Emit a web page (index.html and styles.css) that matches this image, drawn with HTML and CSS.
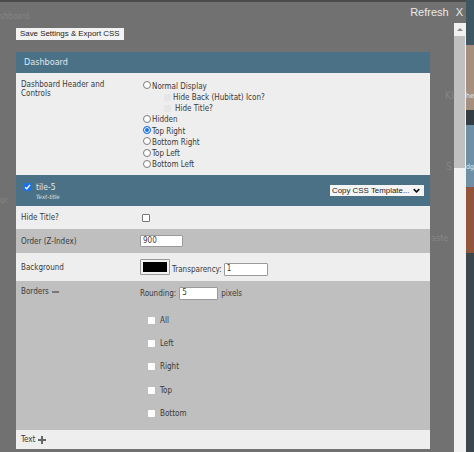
FILE: index.html
```html
<!DOCTYPE html>
<html lang="en">
<head>
<meta charset="utf-8">
<title>Dashboard</title>
<link rel="stylesheet" href="styles.css">
</head>
<body>
<div class="page">
  <div class="overlay">
    <span class="ghost g-or">or</span>
    <span class="ghost g-ki">Ki</span>
    <span class="ghost g-s">S</span>
    <span class="ghost g-as">aste</span>
    <div class="topbar">
      <span class="crumb">shboard</span>
      <span class="actions"><span>Refresh</span><span>X</span></span>
    </div>
    <div class="content">
      <div class="scrollarea">
        <button class="save">Save Settings &amp; Export CSS</button>
        <div class="panel">
          <div class="panel-head">Dashboard</div>
          <div class="row header-row">
            <div class="label wrap">Dashboard Header and Controls</div>
            <div class="options">
              <label class="opt"><span class="radio"></span>Normal Display</label>
              <label class="opt sub"><span class="check dim"></span>Hide Back (Hubitat) Icon?</label>
              <label class="opt sub"><span class="check dim"></span><span class="nudge">Hide Title?</span></label>
              <label class="opt"><span class="radio"></span>Hidden</label>
              <label class="opt"><span class="radio on"></span>Top Right</label>
              <label class="opt"><span class="radio"></span>Bottom Right</label>
              <label class="opt"><span class="radio"></span>Top Left</label>
              <label class="opt"><span class="radio"></span>Bottom Left</label>
            </div>
          </div>
          <div class="tile-head">
            <span class="tick"><svg viewBox="0 0 10 10" width="8" height="8"><path d="M1.5 5.2 4 7.6 8.5 2" fill="none" stroke="#fff" stroke-width="2"/></svg></span>
            <div class="tile-name"><div class="tile-id">tile-5</div><div class="tile-type">Text-title</div></div>
            <div class="select"><span>Copy CSS Template...</span><svg viewBox="0 0 10 6" width="7" height="5"><path d="M1 1 5 5 9 1" fill="none" stroke="#111" stroke-width="2.2"/></svg></div>
          </div>
          <div class="row hide-row">
            <div class="label">Hide Title?</div>
            <span class="check outlined"></span>
          </div>
          <div class="row order-row">
            <div class="label">Order (Z-Index)</div>
            <span class="input order">900</span>
          </div>
          <div class="row bg-row">
            <div class="label">Background</div>
            <span class="swatch"><span class="swatch-fill"></span></span>
            <span class="tlabel">Transparency:</span>
            <span class="input trans">1</span>
          </div>
          <div class="row borders-row">
            <div class="label borders-label">Borders <span class="minus"></span></div>
            <div class="borders">
              <div class="rounding">Rounding: <span class="input round">5</span> pixels</div>
              <div class="sides">
                <label class="side"><span class="check"></span>All</label>
                <label class="side"><span class="check"></span>Left</label>
                <label class="side"><span class="check"></span>Right</label>
                <label class="side"><span class="check"></span>Top</label>
                <label class="side"><span class="check"></span>Bottom</label>
              </div>
            </div>
          </div>
          <div class="text-row">Text <svg viewBox="0 0 8 8" width="8" height="8"><path d="M3 0h2v3h3v2H5v3H3V5H0V3h3z" fill="#666"/></svg></div>
        </div>
      </div>
      <div class="scrollbar">
        <div class="arrow"><svg viewBox="0 0 8 4" width="6" height="3"><path d="M0 4 4 0 8 4z" fill="#888"/></svg></div>
        <div class="thumb"></div>
      </div>
    </div>
  </div>
  <div class="strip">
    <div class="s1"></div>
    <div class="s2"><span class="strip-text">he</span></div>
    <div class="s3"></div>
    <div class="s4"><span class="strip-text">dg</span></div>
    <div class="s5"></div>
    <div class="s6"></div>
  </div>
</div>
</body>
</html>
```
FILE: styles.css
```css
* { box-sizing: border-box; }
html, body { margin: 0; height: 100%; overflow: hidden; }
body { font-family: "DejaVu Sans Condensed", "DejaVu Sans", Verdana, sans-serif; font-size: 8px; color: #333; background: #6f6f6f; }
.page { display: flex; width: 474px; height: 452px; overflow: hidden; }
.overlay { position: relative; width: 466px; flex: none; background: #717171; border-top: 2px solid #4b4b4b; display: flex; flex-direction: column; }
.ghost { position: absolute; color: #868686; font-size: 9px; line-height: 10px; }
.g-or { left: 0; top: 193px; }
.g-ki { left: 445px; top: 89px; font-size: 10px; }
.g-s { left: 446px; top: 160px; font-size: 10px; }
.g-as { left: 431px; top: 231px; }
.topbar { height: 21px; flex: none; display: flex; justify-content: space-between; align-items: flex-start; padding-top: 4px; padding-right: 3px; }
.crumb { font-size: 8px; color: #858585; margin-top: 6px; }
.actions { display: flex; gap: 7px; font-family: "Liberation Sans", Arial, sans-serif; font-size: 11px; color: #e9e9e9; }
.content { display: flex; flex: 1; min-height: 0; }
.scrollarea { flex: 1; padding: 5px 0 0 16px; min-width: 0; }
.save { display: block; height: 12px; width: 108px; padding: 0 0 0 4px; border: 0; background: #f2f2f2; color: #222; font-family: "Liberation Sans", Arial, sans-serif; font-size: 7.9px; text-align: left; line-height: 12px; white-space: nowrap; }
.panel { width: 414px; margin-top: 12px; }
.panel-head { height: 21px; background: #4b7186; color: #dfe9ee; font-size: 9px; line-height: 21px; padding-left: 8px; }
.row { display: flex; padding-left: 5px; color: #3a3a3a; }
.label { width: 119px; flex: none; line-height: 9px; }
.label.wrap { padding-right: 25px; }
.header-row { height: 102px; background: #eeeeee; padding-top: 7px; }
.options { display: flex; flex-direction: column; padding-left: 3px; }
.opt { display: flex; align-items: center; height: 11.25px; padding-top: 1px; white-space: nowrap; }
.sub { padding-left: 21px; }
.nudge { padding-left: 2px; }
.radio { width: 8px; height: 8px; margin-right: 1px; border-radius: 50%; border: 1px solid #7a7a7a; background: #fff; flex: none; margin-top: -2px; }
.radio.on { background: #1a73e8; box-shadow: inset 0 0 0 1px #fff; border-color: #1a73e8; }
.check { display: inline-block; width: 7px; height: 7px; border-radius: 1px; background: #fff; flex: none; }
.check.dim { background: #e6e6e6; margin-right: 2px; }
.check.outlined { width: 8px; height: 8px; border: 1px solid #777; background: #fff; margin-left: 2px; }
.tile-head { height: 31px; background: #4b7186; display: flex; align-items: center; padding: 0 6px 0 8px; }
.tick { width: 7px; height: 8px; background: #1a73e8; border-radius: 1px; display: flex; align-items: center; justify-content: center; margin-bottom: 7px; overflow: hidden; }
.tile-name { margin-left: 5px; flex: 1; margin-top: 1px; }
.tile-id { color: #e2e9ed; font-size: 8.5px; line-height: 11px; }
.tile-type { color: #d8e2e7; font-size: 6px; line-height: 7px; font-style: italic; }
.select { width: 94px; height: 11px; background: #f5f5f5; color: #222; display: flex; justify-content: space-between; align-items: center; padding: 0 4px 0 2px; font-family: "Liberation Sans", Arial, sans-serif; font-size: 7.9px; white-space: nowrap; }
.hide-row { height: 23px; background: #eeeeee; align-items: center; }
.order-row { height: 24px; background: #bfbfbf; align-items: center; }
.input { display: inline-block; background: #fff; border: 1px solid #9a9a9a; border-radius: 1px; color: #3a3a3a; padding-left: 2px; line-height: 10px; }
.order { width: 43px; height: 12px; }
.bg-row { height: 28px; background: #eeeeee; align-items: center; }
.swatch { width: 30px; height: 16px; border: 1px solid #999; background: #f2f2f2; padding: 2px; flex: none; border-radius: 1px; }
.swatch-fill { display: block; height: 100%; background: #000; }
.tlabel { margin-left: 2px; margin-top: 4px; }
.trans { width: 44px; height: 13px; margin-left: 2px; margin-top: 4px; }
.borders-row { height: 149px; background: #bfbfbf; }
.borders-label { margin-top: 5px; display: flex; gap: 3px; align-items: center; height: 10px; }
.minus { display: inline-block; width: 7px; height: 2px; background: #777; margin-top: 1px; }
.rounding { margin-top: 6px; height: 13px; display: flex; align-items: center; gap: 3px; }
.round { width: 39px; height: 13px; }
.sides { margin-left: 8px; margin-top: 9px; display: flex; flex-direction: column; }
.side { display: flex; align-items: center; height: 23.2px; gap: 5px; }
.text-row { height: 19px; background: #eeeeee; padding-left: 5px; display: flex; align-items: center; gap: 3px; font-size: 8px; color: #3a3a3a; }
.scrollbar { width: 12px; flex: none; background: #f1f1f1; display: flex; flex-direction: column; padding-right: 1px; }
.arrow { height: 13px; display: flex; align-items: center; justify-content: center; }
.thumb { height: 132px; background: #c0c0c0; }
.strip { flex: 1; display: flex; flex-direction: column; background: #3c474d; overflow: hidden; }
.strip-text { display: block; color: #e8e8e8; font-size: 7px; line-height: 10px; white-space: nowrap; }
.s1 { height: 45px; background: #3f5763; flex: none; }
.s2 { height: 65px; background: #a58f7f; flex: none; padding-top: 46px; }
.s3 { height: 15px; background: #333d42; flex: none; }
.s4 { height: 62px; background: #6f8fa5; flex: none; padding-top: 37px; }
.s5 { height: 66px; background: #92553b; flex: none; }
.s6 { flex: 1; background: #3c474d; }
```
